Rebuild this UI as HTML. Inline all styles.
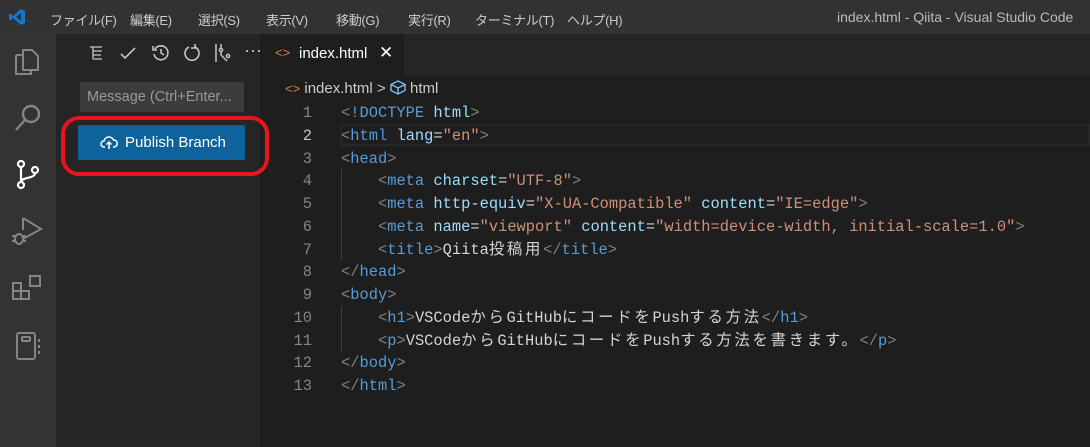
<!DOCTYPE html>
<html><head><style>
body{margin:0;width:1090px;height:447px;overflow:hidden;background:#1e1e1e;font-family:"Liberation Sans","Noto Sans CJK JP",sans-serif;position:relative}
.a{position:absolute}
#title{left:0;top:0;width:1090px;height:34px;background:#323233;color:#ccc;font-size:14px}
#title span{position:absolute;top:9px}
#title span.m{font-size:13px;top:10px;letter-spacing:-0.3px}
#act{left:0;top:34px;width:56px;height:413px;background:#333}
#side{left:56px;top:34px;width:204px;height:413px;background:#252526}
#tabs{left:260px;top:34px;width:830px;height:41px;background:#252526}
#tab{left:260px;top:34px;width:144px;height:41px;background:#1e1e1e;color:#fff;font-size:15px}
.code{font-family:"Liberation Mono","Noto Sans CJK JP",monospace;font-size:15.4px;white-space:pre;color:#d4d4d4}
.ln{color:#858585;width:50px;text-align:right;left:262px}
.t{color:#808080}.k{color:#569cd6}.at{color:#9cdcfe}.s{color:#ce9178}
.j{letter-spacing:2.7px}
</style></head><body>
<div id="title" class="a">
<svg class="a" style="left:8px;top:8px" width="18" height="18" viewBox="0 0 18 18"><path d="M13 1 L17 3 V15 L13 17 L5 10 L2 12.5 L1 12 V6 L2 5.5 L5 8 Z M13 5 L8 9 L13 13 Z" fill="#0e7ad3"/></svg>
<span class="m" style="left:50px">ファイル(F)</span><span class="m" style="left:130px">編集(E)</span><span class="m" style="left:198px">選択(S)</span><span class="m" style="left:266px">表示(V)</span><span class="m" style="left:336px">移動(G)</span><span class="m" style="left:408px">実行(R)</span><span class="m" style="left:475px">ターミナル(T)</span><span class="m" style="left:567px">ヘルプ(H)</span>
<span style="left:837px;color:#bbb">index.html - Qiita - Visual Studio Code</span>
</div>
<div id="act" class="a">
<svg class="a" style="left:12px;top:12px" width="32" height="32" viewBox="0 0 32 32" fill="none" stroke="#858585" stroke-width="2"><path d="M11 4h9l6 6v14H11z M4 9h7 M4 9v19h15v-4"/></svg>
<svg class="a" style="left:12px;top:68px" width="32" height="32" viewBox="0 0 32 32" fill="none" stroke="#858585" stroke-width="2.4"><circle cx="19" cy="12" r="8"/><path d="M13 18L4 28"/></svg>
<svg class="a" style="left:12px;top:124px" width="32" height="32" viewBox="0 0 32 32" fill="none" stroke="#fff" stroke-width="2.2"><circle cx="9" cy="6" r="3"/><circle cx="9" cy="27" r="3"/><circle cx="23" cy="12" r="3"/><path d="M9 9v15 M23 15c0 6-14 4-14 9"/></svg>
<svg class="a" style="left:10px;top:180px" width="34" height="34" viewBox="0 0 34 34" fill="none" stroke="#858585" stroke-width="2"><path d="M13 4v12 M13 4l18 11l-18 10"/><ellipse cx="9" cy="25" rx="4" ry="5"/><path d="M2 22h4 M2 27h4 M12 22h4 M12 27h4"/></svg>
<svg class="a" style="left:11px;top:240px" width="34" height="34" viewBox="0 0 34 34" fill="none" stroke="#858585" stroke-width="2"><path d="M2 9h8v8h8v8H2z M2 17h8v8 M10 17v-8"/><rect x="19" y="2" width="10" height="10"/></svg>
<svg class="a" style="left:14px;top:296px" width="30" height="34" viewBox="0 0 30 34" fill="none" stroke="#858585" stroke-width="2"><rect x="3" y="3" width="18" height="26" rx="2"/><rect x="8" y="7" width="8" height="4" rx="1"/><path d="M25 9v3 M25 15v3 M25 21v3"/></svg>
</div>
<div id="side" class="a">
<div class="a" style="left:30px;top:6px;color:#c5c5c5;font-size:18px;letter-spacing:0">
<svg class="a" style="left:1px;top:4px" width="18" height="18" viewBox="0 0 18 18" fill="none" stroke="#c5c5c5" stroke-width="1.3"><path d="M3 3h12 M6 3v12 M6 7h9 M6 11h8 M6 15h9"/></svg>
<svg class="a" style="left:33px;top:4px" width="18" height="18" viewBox="0 0 18 18" fill="none" stroke="#c5c5c5" stroke-width="1.6"><path d="M2 10l4 4 10-10"/></svg>
<svg class="a" style="left:65px;top:3px" width="20" height="20" viewBox="0 0 20 20" fill="none" stroke="#c5c5c5" stroke-width="1.6"><path d="M4 6a7 7 0 1 1 -1 5 M2 3v4h4 M10 6v4l3 2"/></svg>
<svg class="a" style="left:96px;top:3px" width="20" height="20" viewBox="0 0 20 20" fill="none" stroke="#c5c5c5" stroke-width="1.6"><path d="M13 4a7 7 0 1 1 -6 0 M13 1v4h-4"/></svg>
<svg class="a" style="left:126px;top:3px" width="20" height="20" viewBox="0 0 20 20" fill="none" stroke="#c5c5c5" stroke-width="1.5"><path d="M4 1v18 M9 1v4 M9 9v3l6 6"/><circle cx="9" cy="7" r="1.6"/><circle cx="16" cy="13" r="1.6"/></svg>
<span class="a" style="left:158px;top:0">···</span>
</div>
<div class="a" style="left:24px;top:48px;width:164px;height:30px;background:#3c3c3c;color:#999;font-size:14.5px;line-height:30px;padding-left:7px;box-sizing:border-box;white-space:nowrap;overflow:hidden">Message (Ctrl+Enter...</div>
<div class="a" style="left:22px;top:91px;width:167px;height:35px;background:#0e639c;border-radius:2px;color:#fff;font-size:15px;line-height:35px">
<svg class="a" style="left:22px;top:10px" width="18" height="15" viewBox="0 0 18 15" fill="none" stroke="#fff" stroke-width="1.5"><path d="M5 12H4a3 3 0 0 1 0-6a5 5 0 0 1 9.5-1A3.5 3.5 0 0 1 14 12h-1 M9 14V7 M6.5 9.5L9 7l2.5 2.5"/></svg>
<span class="a" style="left:47px">Publish Branch</span></div>
<div class="a" style="left:5px;top:82px;width:200px;height:52px;border:4px solid #e8141e;border-radius:18px;box-sizing:content-box"></div>
</div>
<div id="tabs" class="a"></div>
<div id="tab" class="a"><span class="a code" style="left:15px;top:11px;color:#e37933;font-size:13px;font-family:'Liberation Sans'">&lt;&gt;</span><span class="a" style="left:39px;top:11px">index.html</span><span class="a" style="left:119px;top:9px;font-size:17px">✕</span></div>
<div class="a" style="left:285px;top:80px;font-size:15px;color:#ccc;white-space:nowrap"><span style="color:#e37933;font-size:13px">&lt;&gt;</span> index.html &gt; <svg width="16" height="15" viewBox="0 0 16 15" fill="none" stroke="#75beff" stroke-width="1.4" style="vertical-align:-2px"><path d="M8 1L15 4.5V10.5L8 14L1 10.5V4.5Z M1 4.5L8 8L15 4.5 M8 8V14"/></svg> html</div>
<div class="a" style="left:340px;top:124px;width:750px;height:22px;border:2px solid #282828;box-sizing:border-box"></div>
<div class="a" style="left:341px;top:169px;width:1px;height:91px;background:#404040"></div>
<div class="a" style="left:341px;top:306px;width:1px;height:46px;background:#404040"></div>
<div class="a code ln" style="top:102px;line-height:22.75px">1
<span style="color:#c6c6c6">2</span>
3
4
5
6
7
8
9
10
11
12
13</div>
<div class="a code" style="left:341px;top:102px;line-height:22.75px"><span class="t">&lt;</span><span class="k">!DOCTYPE</span> <span class="at">html</span><span class="t">&gt;</span>
<span class="t">&lt;</span><span class="k">html</span> <span class="at">lang</span>=<span class="s">"en"</span><span class="t">&gt;</span>
<span class="t">&lt;</span><span class="k">head</span><span class="t">&gt;</span>
    <span class="t">&lt;</span><span class="k">meta</span> <span class="at">charset</span>=<span class="s">"UTF-8"</span><span class="t">&gt;</span>
    <span class="t">&lt;</span><span class="k">meta</span> <span class="at">http-equiv</span>=<span class="s">"X-UA-Compatible"</span> <span class="at">content</span>=<span class="s">"IE=edge"</span><span class="t">&gt;</span>
    <span class="t">&lt;</span><span class="k">meta</span> <span class="at">name</span>=<span class="s">"viewport"</span> <span class="at">content</span>=<span class="s">"width=device-width, initial-scale=1.0"</span><span class="t">&gt;</span>
    <span class="t">&lt;</span><span class="k">title</span><span class="t">&gt;</span>Qiita<span class="j">投稿用</span><span class="t">&lt;/</span><span class="k">title</span><span class="t">&gt;</span>
<span class="t">&lt;/</span><span class="k">head</span><span class="t">&gt;</span>
<span class="t">&lt;</span><span class="k">body</span><span class="t">&gt;</span>
    <span class="t">&lt;</span><span class="k">h1</span><span class="t">&gt;</span>VSCode<span class="j">から</span>GitHub<span class="j">にコードを</span>Push<span class="j">する方法</span><span class="t">&lt;/</span><span class="k">h1</span><span class="t">&gt;</span>
    <span class="t">&lt;</span><span class="k">p</span><span class="t">&gt;</span>VSCode<span class="j">から</span>GitHub<span class="j">にコードを</span>Push<span class="j">する方法を書きます。</span><span class="t">&lt;/</span><span class="k">p</span><span class="t">&gt;</span>
<span class="t">&lt;/</span><span class="k">body</span><span class="t">&gt;</span>
<span class="t">&lt;/</span><span class="k">html</span><span class="t">&gt;</span></div>
</body></html>
